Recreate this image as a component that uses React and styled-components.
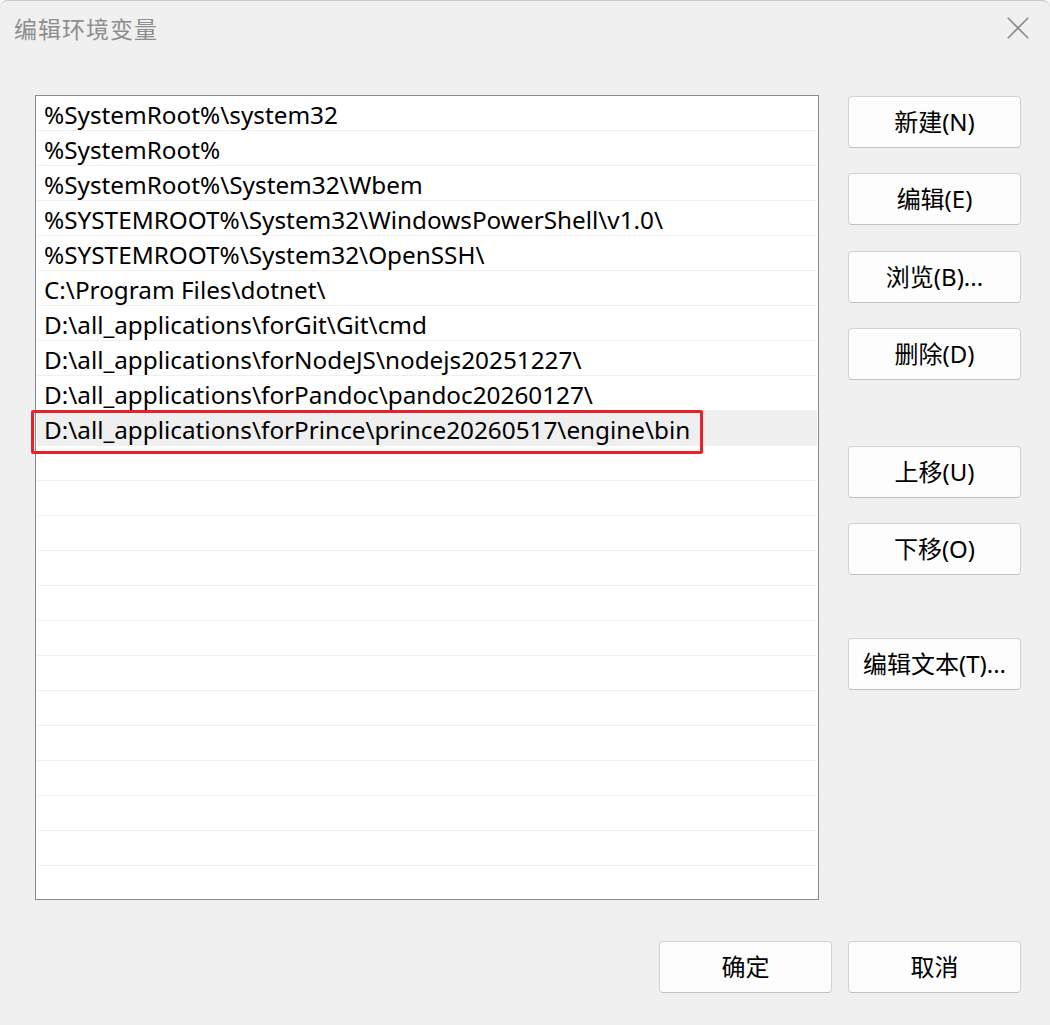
import React from "react";
import styled, { createGlobalStyle } from "styled-components";

const GlobalStyle = createGlobalStyle`
  html, body {
    margin: 0;
    padding: 0;
    background: #f7f7f7;
  }
  body {
    font-family: "Segoe UI", "Noto Sans", "Noto Sans CJK SC", sans-serif;
  }
`;

const FONT = `"Segoe UI", "Noto Sans", "Noto Sans CJK SC", sans-serif`;

const Window = styled.div`
  width: 1050px;
  height: 1025px;
  box-sizing: border-box;
  background: #f0f0f0;
  border-radius: 8px 8px 0 0;
  border-top: 1px solid #c9c9c9;
  display: flex;
  flex-direction: column;
  overflow: hidden;
`;

const TitleBar = styled.div`
  height: 53px;
  flex: none;
  display: flex;
  align-items: center;
  justify-content: space-between;
  padding: 0 17px 0 14px;
`;

const Title = styled.div`
  font-family: ${FONT};
  font-size: 23px;
  color: #8d8d8d;
  letter-spacing: 1px;
`;

const CloseButton = styled.div`
  width: 30px;
  height: 30px;
  display: flex;
  align-items: center;
  justify-content: center;
`;

const Body = styled.div`
  flex: 1;
  display: flex;
  flex-direction: column;
  padding: 41px 29px 32px 35px;
`;

const Main = styled.div`
  display: flex;
  gap: 29px;
`;

const ListBox = styled.div`
  width: 784px;
  height: 805px;
  box-sizing: border-box;
  border: 1px solid #858990;
  background: #ffffff;
  display: flex;
  flex-direction: column;
`;

const Row = styled.div`
  position: relative;
  height: 35px;
  flex: none;
  box-sizing: border-box;
  margin: 0 1px;
  border-bottom: 1px solid ${(p) => (p.$last ? "transparent" : "#efefef")};
  background: ${(p) => (p.$selected ? "#efefef" : "transparent")};
  display: flex;
  align-items: center;
  padding-left: 7px;
  font-family: ${FONT};
  font-size: 24.3px;
  color: #000;
  white-space: nowrap;
`;

const RowText = styled.span`
  position: relative;
  top: 1px;
`;

const Marker = styled.div`
  position: absolute;
  left: -6px;
  top: -1px;
  width: 672px;
  height: 44px;
  box-sizing: border-box;
  border: 3px solid #e8202b;
  border-radius: 2px;
  pointer-events: none;
`;

const SideColumn = styled.div`
  display: flex;
  flex-direction: column;
  padding-top: 1px;
`;

const Button = styled.div`
  width: 173px;
  height: 52px;
  flex: none;
  box-sizing: border-box;
  margin-top: ${(p) => p.$gap || 0}px;
  padding-bottom: 3px;
  background: #fdfdfd;
  border: 1px solid #d2d2d2;
  border-bottom-color: #c2c2c2;
  border-radius: 4px;
  display: flex;
  align-items: center;
  justify-content: center;
  font-family: ${FONT};
  font-size: 24px;
  color: #000;
  white-space: nowrap;
`;

const Footer = styled.div`
  margin-top: auto;
  display: flex;
  justify-content: flex-end;
  gap: 16px;
`;

const paths = [
  "%SystemRoot%\\system32",
  "%SystemRoot%",
  "%SystemRoot%\\System32\\Wbem",
  "%SYSTEMROOT%\\System32\\WindowsPowerShell\\v1.0\\",
  "%SYSTEMROOT%\\System32\\OpenSSH\\",
  "C:\\Program Files\\dotnet\\",
  "D:\\all_applications\\forGit\\Git\\cmd",
  "D:\\all_applications\\forNodeJS\\nodejs20251227\\",
  "D:\\all_applications\\forPandoc\\pandoc20260127\\",
  "D:\\all_applications\\forPrince\\prince20260517\\engine\\bin",
];

const TOTAL_ROWS = 23;
const SELECTED = 9;

export default function App() {
  const rows = Array.from({ length: TOTAL_ROWS }, (_, i) => paths[i] || "");
  return (
    <>
      <GlobalStyle />
      <Window>
        <TitleBar>
          <Title>编辑环境变量</Title>
          <CloseButton>
            <svg width="22" height="22" viewBox="0 0 22 22">
              <path
                d="M0.8 0.8 L21.2 21.2 M21.2 0.8 L0.8 21.2"
                stroke="#8a8a8a"
                strokeWidth="1.6"
                fill="none"
              />
            </svg>
          </CloseButton>
        </TitleBar>
        <Body>
          <Main>
            <ListBox>
              {rows.map((text, i) => (
                <Row key={i} $selected={i === SELECTED} $last={i === TOTAL_ROWS - 1}>
                  <RowText>{text}</RowText>
                  {i === SELECTED && <Marker />}
                </Row>
              ))}
            </ListBox>
            <SideColumn>
              <Button>新建(N)</Button>
              <Button $gap={25}>编辑(E)</Button>
              <Button $gap={26}>浏览(B)...</Button>
              <Button $gap={25}>删除(D)</Button>
              <Button $gap={66}>上移(U)</Button>
              <Button $gap={25}>下移(O)</Button>
              <Button $gap={63}>编辑文本(T)...</Button>
            </SideColumn>
          </Main>
          <Footer>
            <Button>确定</Button>
            <Button>取消</Button>
          </Footer>
        </Body>
      </Window>
    </>
  );
}
